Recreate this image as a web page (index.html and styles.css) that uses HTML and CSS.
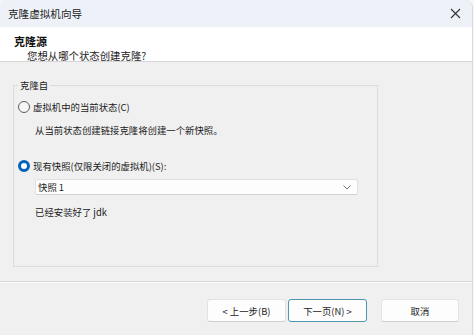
FILE: index.html
```html
<!DOCTYPE html>
<html lang="zh-CN">
<head>
    <meta charset="UTF-8">
    <meta name="viewport" content="width=device-width, initial-scale=1.0">
    <title>克隆虚拟机向导</title>
    <link rel="stylesheet" href="styles.css">
</head>
<body>
    <div class="window">
        <div class="titlebar">
            <span class="title">克隆虚拟机向导</span>
            <span class="close">
                <svg width="11" height="11" viewBox="0 0 11 11">
                    <path d="M1 1 L10 10 M10 1 L1 10" stroke="#333" stroke-width="1.1" fill="none"/>
                </svg>
            </span>
        </div>

        <div class="header">
            <div class="header-title">克隆源</div>
            <div class="header-sub">您想从哪个状态创建克隆?</div>
        </div>

        <div class="content">
            <fieldset class="group">
                <legend>克隆自</legend>

                <div class="option first">
                    <span class="radio"></span>
                    <span>虚拟机中的当前状态(C)</span>
                </div>
                <div class="desc">从当前状态创建链接克隆将创建一个新快照。</div>

                <div class="option second">
                    <span class="radio checked"></span>
                    <span>现有快照(仅限关闭的虚拟机)(S):</span>
                </div>
                <div class="select">
                    <span>快照 1</span>
                    <svg width="8" height="5" viewBox="0 0 8 5">
                        <path d="M0.5 0.5 L4 4 L7.5 0.5" stroke="#777" stroke-width="1" fill="none"/>
                    </svg>
                </div>
                <div class="desc note">已经安装好了 jdk</div>
            </fieldset>
        </div>

        <div class="footer">
            <button class="btn">&lt; 上一步(B)</button>
            <button class="btn btn-default">下一页(N) &gt;</button>
            <button class="btn btn-cancel">取消</button>
        </div>
    </div>
</body>
</html>
```

FILE: styles.css
```css
body {
    margin: 0;
    padding: 0;
    background-color: #f7f7f7;
    font-family: "Noto Sans CJK SC", "Microsoft YaHei", sans-serif;
    color: #1b1b1b;
}

.window {
    width: 472px;
    height: 335px;
    background-color: #f0f0f0;
    border-right: 1px solid #dadada;
    border-radius: 8px 8px 0 0;
    overflow: hidden;
}

.titlebar {
    height: 27px;
    background-color: #eef2f8;
    display: flex;
    align-items: center;
    justify-content: space-between;
    padding: 0 10px 0 8px;
    box-sizing: border-box;
}

.title {
    font-size: 10.6px;
    line-height: 14px;
    color: #222;
}

.close {
    display: flex;
    align-items: center;
    margin-right: 1px;
}

.header {
    height: 35px;
    background-color: white;
    border-bottom: 1px solid #d6d6d6;
    box-sizing: border-box;
    padding-top: 7px;
}

.header-title {
    font-size: 11px;
    font-weight: bold;
    line-height: 14px;
    padding-left: 14px;
    color: #111;
}

.header-sub {
    font-size: 10.4px;
    line-height: 13px;
    padding-left: 27px;
    margin-top: 1px;
    color: #222;
}

.content {
    height: 220px;
    box-sizing: border-box;
    padding: 17px 0 0 13px;
    border-bottom: 1px solid #d9d9d9;
}

.group {
    box-sizing: border-box;
    width: 365px;
    height: 188px;
    margin: 0;
    padding: 0 0 0 4px;
    border: 1px solid #dcdcdc;
    font-size: 9.4px;
    line-height: 13px;
}

.group legend {
    padding: 0 2px;
    margin-left: 0;
    font-size: 9.4px;
    line-height: 13px;
}

.option {
    display: flex;
    align-items: center;
    height: 16px;
}

.option.first {
    margin-top: 7px;
}

.option.second {
    margin-top: 21px;
}

.radio {
    width: 12px;
    height: 12px;
    box-sizing: border-box;
    border: 1px solid #5f5f5f;
    border-radius: 50%;
    background-color: #f6f6f6;
    margin-right: 3px;
}

.radio.checked {
    border: 3.5px solid #0063b8;
    background-color: white;
}

.desc {
    padding-left: 17px;
    margin-top: 9px;
}

.select {
    margin: 5px 0 0 17px;
    width: 323px;
    height: 16px;
    box-sizing: border-box;
    background-color: #fdfdfd;
    border: 1px solid #e0e0e0;
    border-bottom-color: #d2d2d2;
    border-radius: 2px;
    display: flex;
    align-items: center;
    justify-content: space-between;
    padding: 0 6px 0 2px;
}

.desc.note {
    margin-top: 11px;
}

.footer {
    display: flex;
    justify-content: flex-end;
    padding: 16px 13px 0 0;
    border-top: 1px solid #fafafa;
}

.btn {
    width: 79px;
    height: 23px;
    margin: 0;
    padding: 0;
    font-family: inherit;
    font-size: 9.4px;
    color: #1b1b1b;
    background-color: #fdfdfd;
    border: 1px solid #e2e2e2;
    border-bottom-color: #cfcfcf;
    border-radius: 3px;
}

.btn-default {
    margin-left: 2px;
    border-color: #4c96ae;
}

.btn-cancel {
    width: 78px;
    margin-left: 14px;
}
```
